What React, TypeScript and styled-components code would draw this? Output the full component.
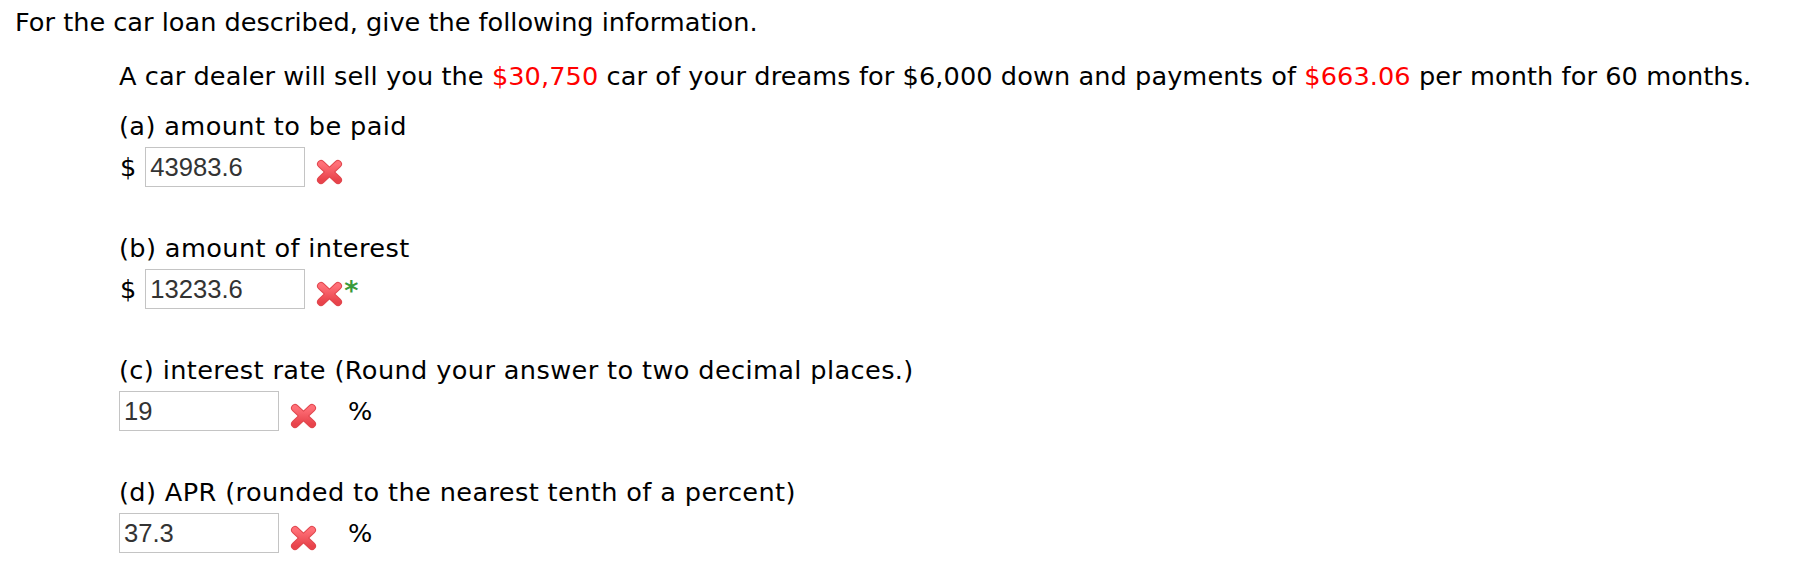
import React from "react";
import styled, { createGlobalStyle } from "styled-components";

const Global = createGlobalStyle`
  html, body { margin: 0; padding: 0; background: #ffffff; }
  body { font-family: "DejaVu Sans", Verdana, sans-serif; color: #000; }
`;

const Page = styled.div`
  padding: 7px 0 0 15px;
  font-size: 25.6px;
  line-height: 30px;
`;

const Intro = styled.div`
  margin-bottom: 24px;
  white-space: nowrap;
`;

const Question = styled.div`
  margin-left: 104px;
  display: flex;
  flex-direction: column;
`;

const Statement = styled.div`
  margin-bottom: 20px;
  white-space: nowrap;
  letter-spacing: 0.08px;
`;

const Red = styled.span`
  color: #ff0000;
`;

const Part = styled.div<{ $last?: boolean }>`
  display: flex;
  flex-direction: column;
  margin-bottom: ${(p) => (p.$last ? 0 : 46)}px;
`;

const Label = styled.div`
  white-space: nowrap;
  letter-spacing: 0.38px;
`;

const AnswerRow = styled.div`
  margin-top: 6px;
  display: flex;
  align-items: center;
  height: 40px;
`;

const Dollar = styled.span`
  margin-left: 1px;
  margin-right: 9px;
`;

const Box = styled.div`
  box-sizing: border-box;
  width: 160px;
  height: 40px;
  border: 1px solid #c4c4c4;
  padding: 0 0 0 4px;
  font-family: "Liberation Sans", Arial, sans-serif;
  font-size: 25.6px;
  line-height: 38px;
  color: #333;
`;

const Mark = styled.span`
  display: inline-flex;
  align-items: flex-start;
  margin-left: 11px;
  margin-top: 9px;
`;

const Star = styled.span`
  color: #3a9a3c;
  font-family: "DejaVu Sans", sans-serif;
  font-weight: bold;
  font-size: 27px;
  line-height: 20px;
  margin-left: 1px;
`;

const Percent = styled.span`
  margin-left: 31px;
`;

const Cross: React.FC = () => (
  <svg width="27" height="26" viewBox="0 0 27 26">
    <defs>
      <linearGradient id="xg" x1="0" y1="0" x2="0" y2="1">
        <stop offset="0" stopColor="#ff7078" />
        <stop offset="1" stopColor="#e8434b" />
      </linearGradient>
    </defs>
    <g strokeLinecap="round">
      <line x1="5" y1="5" x2="22" y2="21" stroke="#e0464d" strokeWidth="8" />
      <line x1="22" y1="5" x2="5" y2="21" stroke="#e0464d" strokeWidth="8" />
      <line x1="5" y1="5" x2="22" y2="21" stroke="url(#xg)" strokeWidth="6" />
      <line x1="22" y1="5" x2="5" y2="21" stroke="url(#xg)" strokeWidth="6" />
    </g>
  </svg>
);

type PartData = {
  label: string;
  value: string;
  dollar?: boolean;
  percent?: boolean;
  star?: boolean;
};

const parts: PartData[] = [
  { label: "(a) amount to be paid", value: "43983.6", dollar: true },
  { label: "(b) amount of interest", value: "13233.6", dollar: true, star: true },
  {
    label: "(c) interest rate (Round your answer to two decimal places.)",
    value: "19",
    percent: true,
  },
  {
    label: "(d) APR (rounded to the nearest tenth of a percent)",
    value: "37.3",
    percent: true,
  },
];

export default function App() {
  return (
    <>
      <Global />
      <Page>
        <Intro>For the car loan described, give the following information.</Intro>
        <Question>
          <Statement>
            A car dealer will sell you the <Red>$30,750</Red> car of your dreams for
            $6,000 down and payments of <Red>$663.06</Red> per month for 60 months.
          </Statement>
          {parts.map((p, i) => (
            <Part key={p.label} $last={i === parts.length - 1}>
              <Label>{p.label}</Label>
              <AnswerRow>
                {p.dollar && <Dollar>$</Dollar>}
                <Box>{p.value}</Box>
                <Mark>
                  <Cross />
                  {p.star && <Star>*</Star>}
                </Mark>
                {p.percent && <Percent>%</Percent>}
              </AnswerRow>
            </Part>
          ))}
        </Question>
      </Page>
    </>
  );
}
